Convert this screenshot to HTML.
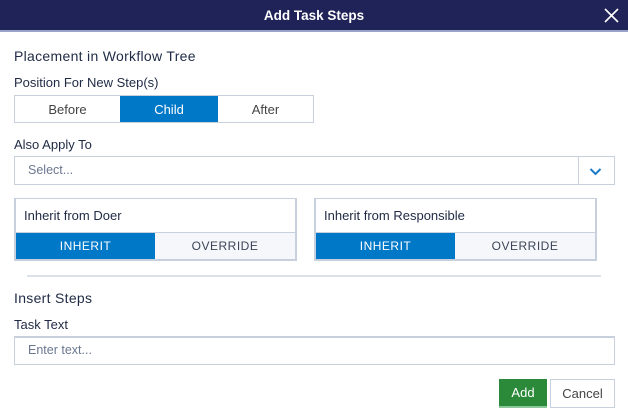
<!DOCTYPE html>
<html><head><meta charset="utf-8"><style>
*{box-sizing:border-box;margin:0;padding:0}
body{width:628px;height:418px;background:#fff;font-family:"Liberation Sans",sans-serif;position:relative;overflow:hidden;color:#1f2a44}
.a{position:absolute}
.hdr{left:0;top:0;width:628px;height:32px;background:#1f2357;border-bottom:2px solid #9aa3c8}
.t{font-size:13px;white-space:nowrap}
.seg{display:flex;align-items:center;justify-content:center;font-size:13px;color:#444}
</style></head><body>
<div class="a hdr"></div>
<div class="a t" style="left:0;width:628px;top:8px;text-align:center;color:#fff;font-weight:bold;font-size:13.5px">Add Task Steps</div>
<svg class="a" style="left:604px;top:8px" width="15" height="15" viewBox="0 0 15 15"><path d="M1 1L14 14M14 1L1 14" stroke="#fff" stroke-width="1.6"/></svg>

<div class="a t" style="left:14px;top:48px;font-size:14px;letter-spacing:0.3px">Placement in Workflow Tree</div>
<div class="a t" style="left:14px;top:75px">Position For New Step(s)</div>
<div class="a" style="left:14px;top:95px;width:300px;height:28px;border:1px solid #c8d0de;display:flex">
 <div class="seg" style="width:105px">Before</div>
 <div class="seg" style="width:98px;background:#0078c8;color:#fff">Child</div>
 <div class="seg" style="flex:1">After</div>
</div>

<div class="a t" style="left:14px;top:137px">Also Apply To</div>
<div class="a" style="left:14px;top:156px;width:601px;height:29px;border:1px solid #c8d0de"></div>
<div class="a t" style="left:28px;top:163px;color:#6b7890;font-size:12.5px">Select...</div>
<div class="a" style="left:578px;top:157px;width:1px;height:27px;background:#c8d0de"></div>
<svg class="a" style="left:589px;top:167px" width="13" height="9" viewBox="0 0 13 9"><path d="M1.5 2L6.5 7L11.5 2" stroke="#1a7ac8" stroke-width="2" fill="none"/></svg>

<div class="a" style="left:14px;top:198px;width:283px;height:63px;border:2px solid #c8d0de;border-top-width:1px"></div>
<div class="a t" style="left:24px;top:208px">Inherit from Doer</div>
<div class="a" style="left:16px;top:232px;width:279px;height:27px;border-top:1px solid #c8d0de;display:flex;background:#f5f7fa">
 <div class="seg" style="width:139px;background:#0078c8;color:#fff;font-size:12px;letter-spacing:0.5px">INHERIT</div>
 <div class="seg" style="flex:1;font-size:12px;letter-spacing:0.5px;color:#3a4456">OVERRIDE</div>
</div>

<div class="a" style="left:314px;top:198px;width:283px;height:63px;border:2px solid #c8d0de;border-top-width:1px"></div>
<div class="a t" style="left:324px;top:208px">Inherit from Responsible</div>
<div class="a" style="left:316px;top:232px;width:279px;height:27px;border-top:1px solid #c8d0de;display:flex;background:#f5f7fa">
 <div class="seg" style="width:139px;background:#0078c8;color:#fff;font-size:12px;letter-spacing:0.5px">INHERIT</div>
 <div class="seg" style="flex:1;font-size:12px;letter-spacing:0.5px;color:#3a4456">OVERRIDE</div>
</div>

<div class="a" style="left:27px;top:275px;width:574px;height:2px;background:#dde2ea"></div>

<div class="a t" style="left:14px;top:290px;font-size:14px;letter-spacing:0.3px">Insert Steps</div>
<div class="a t" style="left:14px;top:317px">Task Text</div>
<div class="a" style="left:14px;top:336px;width:601px;height:29px;border:1px solid #c8d0de;border-width:2px 1px 1px 1px"></div>
<div class="a t" style="left:28px;top:343px;color:#6b7890;font-size:12.5px">Enter text...</div>

<div class="a seg" style="left:499px;top:379px;width:48px;height:29px;background:#2a8a3a;color:#fff;border-bottom:2px solid #8cc79a">Add</div>
<div class="a seg" style="left:550px;top:379px;width:65px;height:29px;border:1px solid #c8d0de;color:#444">Cancel</div>
</body></html>
